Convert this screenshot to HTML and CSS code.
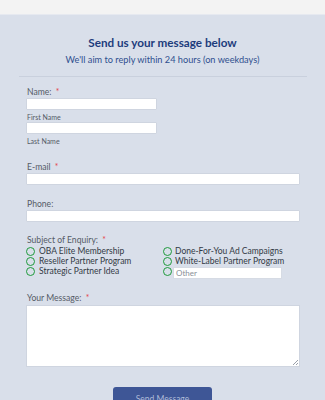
FILE: index.html
```html
<!DOCTYPE html>
<html>
<head>
<meta charset="utf-8">
<link rel="stylesheet" href="styles.css">
</head>
<body>
<div class="card">
  <div class="header">
    <h1 class="title">Send us your message below</h1>
    <p class="subtitle">We'll aim to reply within 24 hours (on weekdays)</p>
  </div>
  <div class="divider"></div>
  <div class="form">
    <div class="field">
      <div class="label">Name: <span class="req">*</span></div>
      <div class="input short"></div>
      <div class="sublabel">First Name</div>
      <div class="input short"></div>
      <div class="sublabel">Last Name</div>
    </div>
    <div class="field email">
      <div class="label">E-mail <span class="req">*</span></div>
      <div class="input"></div>
    </div>
    <div class="field phone">
      <div class="label">Phone:</div>
      <div class="input"></div>
    </div>
    <div class="field subject">
      <div class="label">Subject of Enquiry: <span class="req">*</span></div>
      <div class="radios">
        <div class="col">
          <div class="radio"><span class="circle"></span><span class="rtext">OBA Elite Membership</span></div>
          <div class="radio"><span class="circle"></span><span class="rtext">Reseller Partner Program</span></div>
          <div class="radio"><span class="circle"></span><span class="rtext">Strategic Partner Idea</span></div>
        </div>
        <div class="col col2">
          <div class="radio"><span class="circle"></span><span class="rtext">Done-For-You Ad Campaigns</span></div>
          <div class="radio"><span class="circle"></span><span class="rtext">White-Label Partner Program</span></div>
          <div class="radio"><span class="circle"></span><span class="other">Other</span></div>
        </div>
      </div>
    </div>
    <div class="field message">
      <div class="label">Your Message: <span class="req">*</span></div>
      <div class="textarea"><span class="grip"></span></div>
    </div>
    <div class="actions">
      <button class="btn">Send Message</button>
    </div>
  </div>
</div>
</body>
</html>
```
FILE: styles.css
```css
html, body {
  margin: 0;
  padding: 0;
  background: #f3f3f3;
  font-family: Lato, "Open Sans", "Liberation Sans", sans-serif;
  overflow: hidden;
}
.card {
  margin-top: 14px;
  background: #d9dfea;
  height: 386px;
  border-top: 1px solid #e6e9f0;
  box-sizing: border-box;
}
.header {
  text-align: center;
  padding-top: 18px;
}
.title {
  margin: 0;
  font-size: 11.7px;
  line-height: 18px;
  font-weight: 700;
  color: #1d3c7c;
}
.subtitle {
  margin: 2px 0 0;
  font-size: 9.2px;
  line-height: 14px;
  color: #2f4f8f;
}
.divider {
  margin: 9px 18px 0 19px;
  border-top: 1px solid #c9d0dd;
}
.form {
  padding: 9px 25px 0 26px;
}
.label {
  font-size: 8.6px;
  line-height: 12px;
  color: #555b66;
  padding-left: 1px;
}
.req {
  color: #e5484d;
  margin-left: 2px;
}
.input {
  height: 12px;
  background: #fff;
  border: 1px solid #cfd5e0;
  box-sizing: border-box;
  border-radius: 1px;
}
.input.short {
  width: 131px;
}
.sublabel {
  font-size: 7px;
  line-height: 10px;
  color: #555b66;
  margin-top: 2px;
  padding-left: 1px;
}
.email { margin-top: 15px; }
.phone { margin-top: 13px; }
.subject { margin-top: 12px; }
.radios {
  display: flex;
}
.col {
  width: 139px;
}
.radio {
  display: flex;
  align-items: center;
  height: 10px;
  white-space: nowrap;
}
.rtext {
  font-size: 8.5px;
  line-height: 10px;
  color: #333a45;
}
.circle {
  width: 9px;
  height: 9px;
  border: 1.5px solid #1f9a3c;
  border-radius: 50%;
  box-sizing: border-box;
  margin-right: 4px;
  flex: none;
}
.col2 .circle { margin-right: 3px; }
.col2 .radio:last-child .circle { margin-right: 1px; }
.other {
  display: block;
  width: 109px;
  height: 12px;
  margin-top: 4px;
  background: #fff;
  border: 1px solid #d6dbe4;
  box-sizing: border-box;
  font-size: 8px;
  line-height: 10px;
  color: #8a8f98;
  padding-left: 2px;
}
.message { margin-top: 16px; }
.textarea {
  position: relative;
  margin-top: 1px;
  height: 62px;
  background: #fff;
  border: 1px solid #cfd5e0;
  box-sizing: border-box;
}
.grip {
  position: absolute;
  right: 1px;
  bottom: 1px;
  width: 5px;
  height: 5px;
  background: linear-gradient(135deg, transparent 45%, #9aa0aa 45%, #9aa0aa 55%, transparent 55%, transparent 75%, #9aa0aa 75%, #9aa0aa 85%, transparent 85%);
}
.actions {
  display: flex;
  justify-content: center;
  margin-top: 20px;
}
.btn {
  width: 99px;
  height: 24px;
  background: #3e5696;
  color: #aebbd8;
  border: none;
  border-radius: 3px;
  font-family: Lato, "Open Sans", "Liberation Sans", sans-serif;
  font-size: 8.5px;
  padding: 0;
  margin-right: 1px;
}
```
